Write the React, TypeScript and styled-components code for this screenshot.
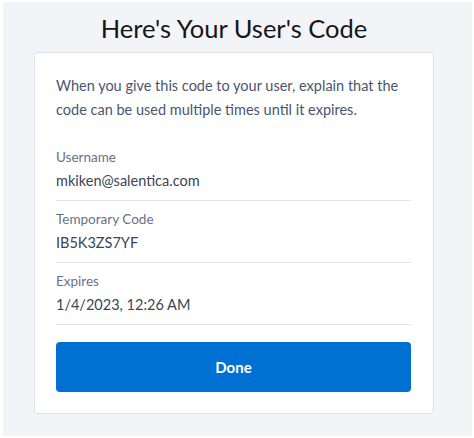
import styled, { createGlobalStyle } from "styled-components";

const GlobalStyle = createGlobalStyle`
  html, body {
    margin: 0;
    padding: 0;
    background: #ffffff;
  }
  body {
    font-family: Lato, "Open Sans", Arial, sans-serif;
  }
`;

const fields = [
  { label: "Username", value: "mkiken@salentica.com" },
  { label: "Temporary Code", value: "IB5K3ZS7YF" },
  { label: "Expires", value: "1/4/2023, 12:26 AM" },
];

export default function App() {
  return (
    <>
      <GlobalStyle />
      <Frame>
        <Page>
          <Title>Here's Your User's Code</Title>
          <Card>
            <Intro>
              When you give this code to your user, explain that the code can
              be used multiple times until it expires.
            </Intro>
            <FieldList>
              {fields.map((f) => (
                <Field key={f.label}>
                  <Label>{f.label}</Label>
                  <Value>{f.value}</Value>
                </Field>
              ))}
            </FieldList>
            <DoneButton>Done</DoneButton>
          </Card>
        </Page>
      </Frame>
    </>
  );
}

const Frame = styled.div`
  padding: 2px 2px 2px 3px;
  height: 438px;
  box-sizing: border-box;
`;

const Page = styled.div`
  background: #f3f4f8;
  height: 100%;
  padding: 10px 0 0 31px;
  box-sizing: border-box;
`;

const Title = styled.h1`
  margin: 0;
  width: 400px;
  text-align: center;
  font-size: 25.5px;
  font-weight: 400;
  color: #16161a;
  line-height: 32px;
`;

const Card = styled.div`
  margin-top: 8px;
  width: 400px;
  box-sizing: border-box;
  background: #ffffff;
  border: 1px solid #dfe1e8;
  border-radius: 4px;
  padding: 21px 22px 21px 21px;
`;

const Intro = styled.p`
  margin: 0 0 17px;
  font-size: 14.5px;
  line-height: 24px;
  color: #4a5670;
`;

const FieldList = styled.div`
  display: flex;
  flex-direction: column;
`;

const Field = styled.div`
  border-bottom: 1px solid #e2e4ea;
  padding: 7px 0 8px;
`;

const Label = styled.div`
  font-size: 13.5px;
  line-height: 23px;
  color: #67728a;
`;

const Value = styled.div`
  font-size: 14.5px;
  line-height: 23px;
  color: #3b4557;
`;

const DoneButton = styled.button`
  display: block;
  width: 100%;
  height: 50px;
  margin-top: 17px;
  border: none;
  border-radius: 4px;
  background: #0070d2;
  color: #ffffff;
  font-family: Lato, "Open Sans", Arial, sans-serif;
  font-size: 15px;
  font-weight: 700;
  cursor: pointer;
`;
